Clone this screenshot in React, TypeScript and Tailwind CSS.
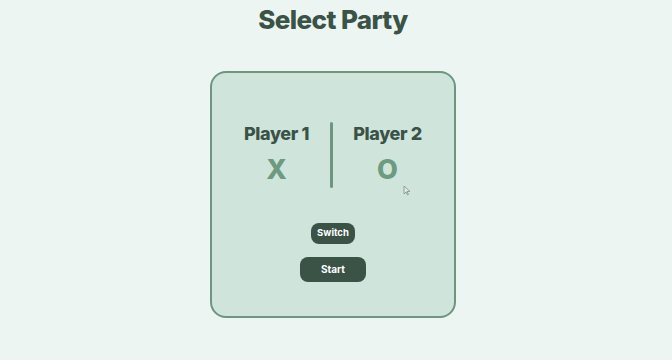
import React from "react";

export default function App() {
  return (
    <div className="w-[672px] h-[360px] bg-[#ecf5f2] overflow-hidden relative" style={{ fontFamily: "Inter, 'Open Sans', sans-serif" }}>
      <div className="w-[666px] flex flex-col items-center">
        <h1 className="mt-[4px] text-[26px] leading-[32px] font-extrabold text-[#3b5247] tracking-[-0.6px]">Select Party</h1>
        <div className="mt-[35px] w-[246px] h-[247px] bg-[#cfe5dc] border-2 border-[#6e9580] rounded-[16px] flex flex-col items-center">
          <div className="mt-[49px] flex items-center">
            <div className="w-[106px] flex flex-col items-center -mt-[1px]">
              <div className="text-[18px] leading-[22px] font-extrabold text-[#3b5247] tracking-[-0.4px]">Player 1</div>
              <div className="mt-[9px] text-[27px] leading-[32px] font-extrabold text-[#6e9a80]">X</div>
            </div>
            <div className="w-[3px] h-[66px] bg-[#6e9580] rounded-full" />
            <div className="w-[110px] flex flex-col items-center -mt-[1px]">
              <div className="text-[18px] leading-[22px] font-extrabold text-[#3b5247] tracking-[-0.4px]">Player 2</div>
              <div className="mt-[9px] text-[27px] leading-[32px] font-extrabold text-[#6e9a80]">O</div>
            </div>
          </div>
          <button className="mt-[35px] w-[44px] h-[21px] rounded-[8px] bg-[#3b5247] text-white text-[9.5px] font-bold">Switch</button>
          <button className="mt-[13px] w-[66px] h-[25px] rounded-[8px] bg-[#3b5247] text-white text-[10px] font-bold">Start</button>
        </div>
      </div>
      <svg className="absolute left-[403px] top-[185px]" width="8" height="11" viewBox="0 0 8 11">
        <path d="M1 1 L1 9 L3 7 L4.5 10 L5.5 9.5 L4 6.5 L7 6.5 Z" fill="#dfe8e5" stroke="#7f9088" strokeWidth="0.8" />
      </svg>
    </div>
  );
}
